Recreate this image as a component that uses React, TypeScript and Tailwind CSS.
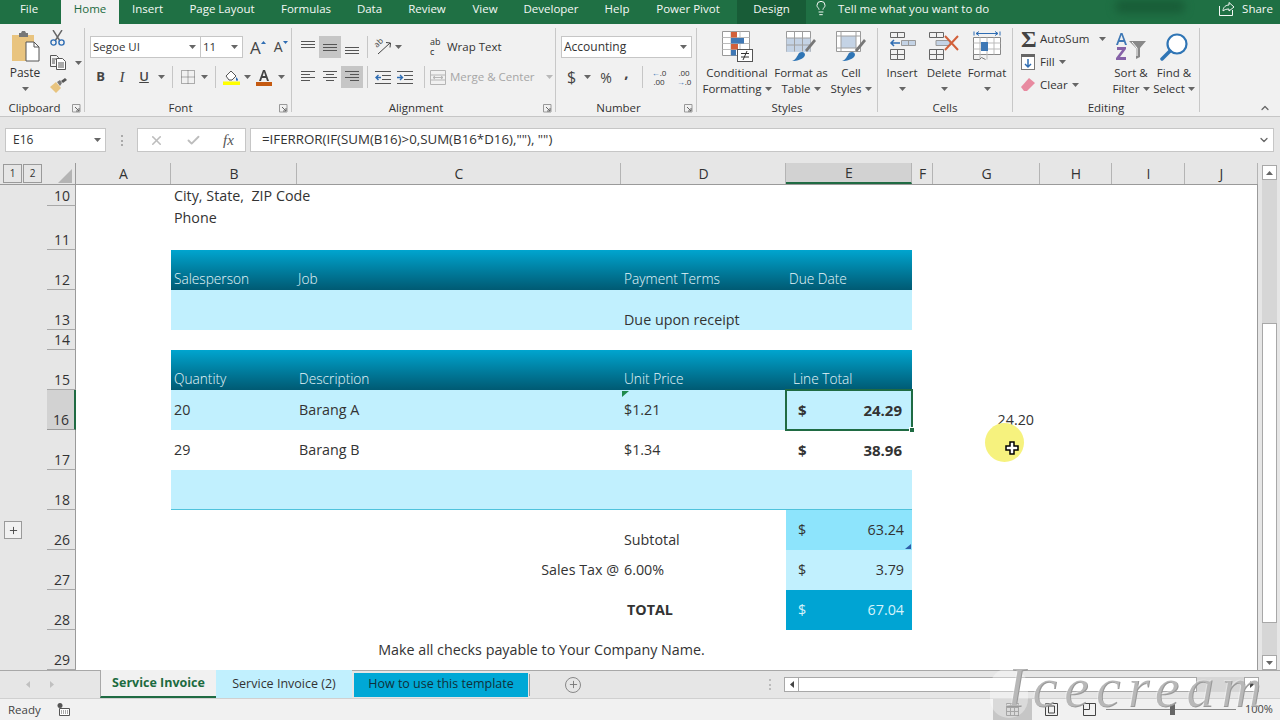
import type { ReactNode } from 'react';
import clsx from 'clsx';
import { Check, ChevronDown, ChevronUp, Lightbulb, Plus, X } from 'lucide-react';

const tabs = [
  { label: 'File', w: 'w-[58px] mr-[3px]' },
  { label: 'Home', w: 'w-[58px] bg-[#f1f1f1] text-[#1c6b40]' },
  { label: 'Insert', w: 'w-[57px]' },
  { label: 'Page Layout', w: 'w-[92px]' },
  { label: 'Formulas', w: 'w-[76px]' },
  { label: 'Data', w: 'w-[51px]' },
  { label: 'Review', w: 'w-[64px]' },
  { label: 'View', w: 'w-[52px]' },
  { label: 'Developer', w: 'w-[80px]' },
  { label: 'Help', w: 'w-[52px]' },
  { label: 'Power Pivot', w: 'w-[90px] mr-[4px]' },
  { label: 'Design', w: 'w-[69px] bg-[#185c37]' },
];

const columns = [
  { label: 'A', w: 'w-[95px]' },
  { label: 'B', w: 'w-[126px]' },
  { label: 'C', w: 'w-[324px]' },
  { label: 'D', w: 'w-[165px]' },
  { label: 'E', w: 'w-[126px] bg-[#d2d2d2] border-b-2 border-b-[#1f6b43]' },
  { label: 'F', w: 'w-[21px]' },
  { label: 'G', w: 'w-[107px]' },
  { label: 'H', w: 'w-[72px]' },
  { label: 'I', w: 'w-[73px]' },
  { label: 'J', w: 'w-[73px]' },
];

const BAND = 'bg-[#c1f0fe]';
const HEAD = 'bg-gradient-to-b from-[#00a5cf] to-[#005a73] text-[#e6f5f9] items-end text-[13.7px] font-light';

function Caret({ className }: { className?: string }) {
  return (
    <svg width="7" height="4" viewBox="0 0 7 4" className={clsx('inline-block shrink-0', className)}>
      <path d="M0 0h7L3.5 4z" fill="#666" />
    </svg>
  );
}

function Slot({ className, children }: { className?: string; children?: ReactNode }) {
  return <span className={clsx('flex shrink-0 items-center justify-center h-full', className)}>{children}</span>;
}

function Sep() {
  return <span className="w-px h-[22px] bg-[#c6c6c6] shrink-0" />;
}

function Launcher() {
  return (
    <svg width="9" height="9" viewBox="0 0 9 9" className="absolute right-[3px] top-[4px]">
      <path d="M.5 8V.5H8V8z" fill="none" stroke="#999" />
      <path d="M3 3l4 4M7 4v3H4" fill="none" stroke="#666" />
    </svg>
  );
}

function Group({ w, label, launcher, children }: { w: string; label: string; launcher?: boolean; children: ReactNode }) {
  return (
    <div className={clsx('relative h-[84px] shrink-0 border-r border-[#c8c8c8]', w)}>
      <div className="h-[72px]">{children}</div>
      <div className={clsx('relative h-[16px] leading-[16px] text-center text-[#333]', launcher && 'pr-[15px]')}>
        {label}
        {launcher && <Launcher />}
      </div>
    </div>
  );
}

function BigButton({ w, icon, line1, line2 }: { w: string; icon: ReactNode; line1: string; line2?: string }) {
  return (
    <div className={clsx('flex flex-col items-center shrink-0 whitespace-nowrap leading-[16px]', w)}>
      <div className="h-[37px] flex items-center justify-center">{icon}</div>
      <div>{line1}</div>
      <div className="h-[16px] flex items-center gap-[3px]">
        {line2}
        <Caret />
      </div>
    </div>
  );
}

function Lines({ rows }: { rows: [number, number][] }) {
  return (
    <svg width="16" height="14" viewBox="0 0 16 14">
      {rows.map(([x, w], i) => (
        <rect key={i} x={x} y={i * 3 + 1} width={w} height="1" fill="#555" />
      ))}
    </svg>
  );
}

function VAlign({ y }: { y: number }) {
  return (
    <svg width="15" height="14" viewBox="0 0 15 14">
      <rect x="0" y={y} width="14" height="1" fill="#555" />
      <rect x="0" y={y + 3} width="14" height="1" fill="#555" />
      <rect x="0" y={y + 6} width="14" height="1" fill="#555" />
    </svg>
  );
}

function PasteIcon() {
  return (
    <svg width="29" height="31" viewBox="0 0 29 31">
      <path d="M1 4h22v26H1z" fill="#e9c47f" />
      <path d="M8 4V2h2l1-2h3l1 2h2v4H8z" fill="#777" />
      <path d="M15 11h8l5 5v14H15z" fill="#fff" stroke="#555" />
      <path d="M23 11v5h5" fill="none" stroke="#555" />
    </svg>
  );
}

function CutIcon() {
  return (
    <svg width="15" height="16" viewBox="0 0 15 16" fill="none">
      <path d="M3 0l7 11M12 0L5 11" stroke="#666" strokeWidth="1.4" />
      <circle cx="3.5" cy="12.5" r="2.6" stroke="#2f6db3" strokeWidth="1.4" />
      <circle cx="11.5" cy="12.5" r="2.6" stroke="#2f6db3" strokeWidth="1.4" />
    </svg>
  );
}

function CopyIcon() {
  return (
    <svg width="16" height="15" viewBox="0 0 16 15" fill="none" stroke="#555">
      <path d="M.5.5h6l2 2v9H.5z" fill="#f4f4f4" />
      <path d="M6.5 3.5h6l3 3v8h-9z" fill="#fff" />
      <path d="M8 8h6M8 10h6M8 12h6M2 4h4M2 6h3M2 8h3" />
    </svg>
  );
}

function BrushIcon() {
  return (
    <svg width="17" height="15" viewBox="0 0 17 15">
      <path d="M0 9l6-5 5 6-5 5z" fill="#e8c47f" />
      <path d="M7 4l3-2 2 3-2 3z" fill="#777" />
      <path d="M11 3l4-3 2 2-4 3z" fill="#555" />
    </svg>
  );
}

function BordersIcon() {
  return (
    <svg width="14" height="14" viewBox="0 0 14 14" fill="none" stroke="#666" strokeDasharray="1 1">
      <path d="M.5.5h13v13H.5zM7 .5v13M.5 7h13" />
    </svg>
  );
}

function FillIcon() {
  return (
    <svg width="17" height="16" viewBox="0 0 17 16">
      <path d="M3 7l5-5 5 5-4 4H6z" fill="#fff" stroke="#555" />
      <path d="M13 8c1 1 2 2 2 3s-2 1-2 0z" fill="#2f6db3" />
      <rect x="0" y="12.5" width="17" height="3.5" fill="#ffff00" />
    </svg>
  );
}

function FontColorIcon() {
  return (
    <svg width="16" height="17" viewBox="0 0 16 17">
      <rect x="0" y="13" width="16" height="4" fill="#c55a11" />
      <path d="M3 12L7 1h2l4 11h-2l-1-3H6l-1 3zM6.7 7h2.6L8 3z" fill="#444" />
    </svg>
  );
}

function OrientationIcon() {
  return (
    <svg width="17" height="16" viewBox="0 0 17 16" fill="none" className="overflow-visible">
      <text x="0" y="0" fontSize="8" fill="#444" transform="translate(2 9) rotate(-45)">ab</text>
      <path d="M3 15L15 4M11 3.500l4.500.5-.5 4.500" stroke="#444" />
    </svg>
  );
}

function IndentIcon({ flip }: { flip?: boolean }) {
  return (
    <svg width="16" height="13" viewBox="0 0 16 13" fill="none">
      <path d="M0 .5h16M7 4.500h9M7 8.500h9M0 12.500h16" stroke="#555" />
      <path d={flip ? 'M0 6.500h5M3 4l2.500 2.500L3 9' : 'M6 6.500H1M3.500 4L1 6.500 3.500 9'} stroke="#2f6db3" strokeWidth="1.4" />
    </svg>
  );
}

function MergeIcon() {
  return (
    <svg width="16" height="15" viewBox="0 0 16 15" fill="none" stroke="#b5b5b5">
      <path d="M.5.5h15v14H.5zM.5 5h15M.5 10h15M3 7.500h10M5 6L3 7.500 5 9M11 6l2 1.500L11 9" />
    </svg>
  );
}

function CondFormatIcon() {
  return (
    <svg width="31" height="31" viewBox="0 0 31 31">
      <path d="M.5.5h27v24H.5z" fill="#fff" stroke="#999" />
      <path d="M9 .5v24M18 .5v24M.5 6.500h27M.5 12.500h27M.5 18.500h27" stroke="#bbb" />
      <rect x="9" y="1" width="6" height="5.5" fill="#d2603a" />
      <rect x="9" y="7" width="13" height="5.5" fill="#3f78b5" />
      <rect x="9" y="13" width="7" height="5.5" fill="#d2603a" />
      <rect x="9" y="19" width="5" height="5.5" fill="#3f78b5" />
      <rect x="15.5" y="18.5" width="15" height="12" fill="#fff" stroke="#555" />
      <path d="M19 22.500h8M19 26h8M25 20l-4 9" stroke="#333" />
    </svg>
  );
}

function TableIcon() {
  return (
    <svg width="30" height="31" viewBox="0 0 30 31">
      <path d="M.5.5h24v20H.5z" fill="#fff" stroke="#999" />
      <path d="M.5 7h24v14H.5z" fill="#c4d3e5" />
      <path d="M8.500.5v20M16.500.5v20M.5 7h24M.5 14h24" stroke="#a0a0a0" />
      <path d="M19 19l9-11 2 2-9 11z" fill="#777" />
      <path d="M6 30c4-1 5-5 7-8 3-2 6-1 6 2-1 4-8 6-13 6z" fill="#2f75b5" />
    </svg>
  );
}

function CellStylesIcon() {
  return (
    <svg width="30" height="31" viewBox="0 0 30 31">
      <path d="M.5.5h24v20H.5z" fill="#fff" stroke="#999" />
      <path d="M5 5h15v12H5z" fill="#c4d3e5" />
      <path d="M5 .5v20M20 .5v20M.5 5h24M.5 17h24" stroke="#a0a0a0" />
      <path d="M19 19l9-11 2 2-9 11z" fill="#777" />
      <path d="M6 30c4-1 5-5 7-8 3-2 6-1 6 2-1 4-8 6-13 6z" fill="#2f75b5" />
    </svg>
  );
}

function InsertIcon() {
  return (
    <svg width="27" height="29" viewBox="0 0 27 29" fill="none">
      <path d="M1.500.5h14v5h-14zM8.500.5v5M1.500 17.500h14v10h-14zM8.500 17.500v10M1.500 22.500h14" stroke="#666" />
      <path d="M12.500 8.500h14v5h-14z" fill="#c4d3e5" stroke="#999" />
      <path d="M19.500 8.500v5" stroke="#999" />
      <path d="M11 11H2M5 8l-3 3 3 3" stroke="#2f6db3" strokeWidth="1.5" />
    </svg>
  );
}

function DeleteIcon() {
  return (
    <svg width="30" height="29" viewBox="0 0 30 29" fill="none">
      <path d="M.5.5h14v5H.5zM7.500.5v5M.5 17.500h14v10H.5zM7.500 17.500v10M.5 22.500h14" stroke="#666" />
      <path d="M7 8.500h14v5H7z" fill="#c4d3e5" stroke="#999" />
      <path d="M16 4l13 14M29 4L16 18" stroke="#d2603a" strokeWidth="2" />
    </svg>
  );
}

function FormatIcon() {
  return (
    <svg width="28" height="31" viewBox="0 0 28 31" fill="none">
      <path d="M.5 6.500h27v17H.5z" fill="#fff" stroke="#888" />
      <path d="M7 6.500v22M14 6.500v22M21 6.500v17M.5 12h27M.5 18h27" stroke="#bbb" />
      <rect x="8" y="11" width="7" height="9" fill="#3f78b5" />
      <path d="M.5 23.500v5h6l2-2 4 2" stroke="#777" />
      <path d="M1 .5v4M27 .5v4M3 2.500h22M6 .5L3 2.500l3 2M22 .5l3 2-3 2" stroke="#2f6db3" />
    </svg>
  );
}

function SortIcon() {
  return (
    <svg width="31" height="28" viewBox="0 0 31 28">
      <path d="M0 12L4.500 0h2L11 12H9l-1-3H3l-1 3zM3.700 7h3.600L5.500 2z" fill="#3f78b5" />
      <path d="M1 14h9v2l-6 8h6v3H0v-2l6-8H1z" fill="#8662a8" />
      <path d="M13 8h17l-6 7v9l-4 2V15z" fill="#888" />
      <path d="M16 9l5 6v8" stroke="#fff" fill="none" />
    </svg>
  );
}

function FindIcon() {
  return (
    <svg width="28" height="28" viewBox="0 0 28 28" fill="none">
      <circle cx="17" cy="11" r="9.500" stroke="#2f75b5" strokeWidth="2.2" fill="#fff" />
      <path d="M10 18L2 26" stroke="#2f75b5" strokeWidth="3.5" strokeLinecap="round" />
    </svg>
  );
}

function Ribbon() {
  return (
    <div className="flex h-[93px] pt-[4px] bg-[#f1f1f1] border-b border-[#c6c6c6] text-[11.5px] text-[#333]">
      <Group w="w-[85px]" label="Clipboard" launcher>
        <div className="flex">
          <div className="w-[50px] flex flex-col items-center">
            <div className="h-[34px] flex items-end">
              <PasteIcon />
            </div>
            <div className="mt-[3px] leading-[16px] text-[12px]">Paste</div>
            <Caret className="mt-[6px]" />
          </div>
          <div className="flex flex-col gap-[8px] pt-[2px]">
            <CutIcon />
            <div className="flex items-center gap-[9px] mt-[1px]">
              <CopyIcon />
              <Caret />
            </div>
            <BrushIcon />
          </div>
        </div>
      </Group>

      <Group w="w-[207px]" label="Font" launcher>
        <div className="flex flex-col gap-[8px] pt-[8px] pl-[5px]">
          <div className="flex items-center h-[22px]">
            <div className="w-[111px] h-[22px] bg-white border border-[#c6c6c6] flex items-center justify-between pl-[2px] pr-[4px] leading-none">
              Segoe UI
              <Caret />
            </div>
            <div className="w-[42px] h-[22px] bg-white border border-l-0 border-[#c6c6c6] flex items-center justify-between pl-[2px] pr-[4px] leading-none">
              11
              <Caret />
            </div>
            <span className="ml-[7px] text-[17px] leading-none text-[#444]">A</span>
            <svg width="5" height="3" className="mb-[10px]"><path d="M0 3l2.500-3L5 3z" fill="#2f6db3" /></svg>
            <span className="ml-[8px] text-[14px] leading-none text-[#444]">A</span>
            <svg width="5" height="3" className="mb-[10px]"><path d="M0 0l2.500 3L5 0z" fill="#2f6db3" /></svg>
          </div>
          <div className="flex items-center h-[22px]">
            <Slot className="w-[21px] font-bold text-[13px] text-[#444]">B</Slot>
            <Slot className="w-[22px] italic text-[#444] font-['Liberation_Serif',serif] text-[15px]">I</Slot>
            <Slot className="w-[22px] underline text-[13px] text-[#444] font-semibold">U</Slot>
            <Slot className="w-[12px]"><Caret /></Slot>
            <Slot className="w-[5px]" />
            <Sep />
            <Slot className="w-[3px]" />
            <Slot className="w-[23px]"><BordersIcon /></Slot>
            <Slot className="w-[11px]"><Caret /></Slot>
            <Slot className="w-[5px]" />
            <Sep />
            <Slot className="w-[3px]" />
            <Slot className="w-[24px]"><FillIcon /></Slot>
            <Slot className="w-[8px]"><Caret /></Slot>
            <Slot className="w-[26px]"><FontColorIcon /></Slot>
            <Slot className="w-[8px]"><Caret /></Slot>
          </div>
        </div>
      </Group>

      <Group w="w-[264px]" label="Alignment" launcher>
        <div className="flex flex-col gap-[8px] pt-[8px] pl-[5px]">
          <div className="flex items-center h-[22px]">
            <Slot className="w-[22px]"><VAlign y={1} /></Slot>
            <Slot className="w-[22px] bg-[#c6c6c6]"><VAlign y={4} /></Slot>
            <Slot className="w-[22px]"><VAlign y={7} /></Slot>
            <Slot className="w-[4px]" />
            <Sep />
            <Slot className="w-[4px]" />
            <Slot className="w-[22px]"><OrientationIcon /></Slot>
            <Slot className="w-[8px]"><Caret /></Slot>
            <Slot className="w-[28px]" />
            <span className="flex items-center whitespace-nowrap">
              <span className="text-[#2a2a2a] text-[9px] leading-[10px] w-[17px]">
                ab
                <br />
                c
              </span>
              Wrap Text
            </span>
          </div>
          <div className="flex items-center h-[22px]">
            <Slot className="w-[22px]"><Lines rows={[[1, 14], [1, 9], [1, 14], [1, 9]]} /></Slot>
            <Slot className="w-[22px]"><Lines rows={[[1, 14], [4, 8], [1, 14], [4, 8]]} /></Slot>
            <Slot className="w-[22px] bg-[#c6c6c6]"><Lines rows={[[1, 14], [6, 9], [1, 14], [6, 9]]} /></Slot>
            <Slot className="w-[4px]" />
            <Sep />
            <Slot className="w-[4px]" />
            <Slot className="w-[22px]"><IndentIcon /></Slot>
            <Slot className="w-[22px]"><IndentIcon flip /></Slot>
            <Slot className="w-[8px]" />
            <Sep />
            <Slot className="w-[5px]" />
            <MergeIcon />
            <span className="ml-[4px] w-[96px] text-[#a6a6a6] whitespace-nowrap">Merge &amp; Center</span>
            <Caret className="opacity-40" />
          </div>
        </div>
      </Group>

      <Group w="w-[141px]" label="Number" launcher>
        <div className="flex flex-col gap-[8px] pt-[8px] pl-[5px]">
          <div className="w-[131px] h-[22px] bg-white border border-[#c6c6c6] flex items-center justify-between pl-[2px] pr-[4px] leading-none text-[12px]">
            Accounting
            <Caret />
          </div>
          <div className="flex items-center h-[22px]">
            <Slot className="w-[21px] text-[16px] text-[#444]">$</Slot>
            <Slot className="w-[11px]"><Caret /></Slot>
            <Slot className="w-[26px] text-[14px] text-[#444]">%</Slot>
            <Slot className="w-[15px] text-[15px] font-bold text-[#444] pb-[10px]">,</Slot>
            <Slot className="w-[8px]" />
            <Sep />
            <Slot className="w-[7px]" />
            <Slot className="w-[18px] text-[8px] leading-[9px] text-[#333] flex-col">
              <span><span className="text-[#2f6db3]">←</span>.0</span>
              <span>.00</span>
            </Slot>
            <Slot className="w-[7px]" />
            <Slot className="w-[18px] text-[8px] leading-[9px] text-[#333] flex-col">
              <span>.00</span>
              <span><span className="text-[#2f6db3]">→</span>.0</span>
            </Slot>
          </div>
        </div>
      </Group>

      <Group w="w-[181px]" label="Styles">
        <div className="flex">
          <BigButton w="w-[80px]" icon={<CondFormatIcon />} line1="Conditional" line2="Formatting" />
          <BigButton w="w-[48px]" icon={<TableIcon />} line1="Format as" line2="Table" />
          <BigButton w="w-[52px]" icon={<CellStylesIcon />} line1="Cell" line2="Styles" />
        </div>
      </Group>

      <Group w="w-[135px]" label="Cells">
        <div className="flex pl-[2px]">
          <BigButton w="w-[44px]" icon={<InsertIcon />} line1="Insert" />
          <BigButton w="w-[40px]" icon={<DeleteIcon />} line1="Delete" />
          <BigButton w="w-[46px]" icon={<FormatIcon />} line1="Format" />
        </div>
      </Group>

      <Group w="w-[187px]" label="Editing">
        <div className="flex">
          <div className="w-[97px] flex flex-col pl-[8px]">
            <div className="h-[22px] flex items-center">
              <span className="w-[19px] text-[24px] leading-none font-bold text-[#444] font-['Liberation_Serif',serif]">Σ</span>
              AutoSum
              <Caret className="ml-[10px]" />
            </div>
            <div className="h-[23px] flex items-center">
              <svg width="14" height="16" viewBox="0 0 14 16" className="mr-[5px]">
                <rect x=".5" y=".5" width="13" height="15" fill="#fff" stroke="#777" />
                <rect x="0" y="0" width="14" height="3" fill="#666" />
                <path d="M7 5v8M4 10l3 3 3-3" stroke="#2f6db3" strokeWidth="1.5" fill="none" />
              </svg>
              Fill
              <Caret className="ml-[4px]" />
            </div>
            <div className="h-[23px] flex items-center">
              <svg width="14" height="13" viewBox="0 0 14 13" className="mr-[5px]">
                <path d="M0 9l8-9 6 5-8 8H3z" fill="#e88aa0" />
              </svg>
              Clear
              <Caret className="ml-[4px]" />
            </div>
          </div>
          <BigButton w="w-[42px]" icon={<SortIcon />} line1="Sort &" line2="Filter" />
          <BigButton w="w-[44px]" icon={<FindIcon />} line1="Find &" line2="Select" />
        </div>
      </Group>

      <div className="flex-1 relative">
        <ChevronUp size={12} strokeWidth={2.5} className="absolute right-[9px] top-[74px] text-[#666]" />
      </div>
    </div>
  );
}

function FormulaBar() {
  return (
    <div className="flex items-center h-[46px] bg-[#e6e6e6] text-[12px] text-[#333]">
      <div className="ml-[5px] w-[101px] h-[24px] bg-white border border-[#c6c6c6] flex items-center justify-between pl-[7px] pr-[4px]">
        E16
        <Caret />
      </div>
      <div className="w-[31px] flex justify-center text-[#aaa] leading-none">
        <span className="w-[2px] h-[11px] border-l-2 border-dotted border-[#aaa]" />
      </div>
      <div className="w-[109px] h-[24px] bg-white border border-[#c6c6c6] flex items-center">
        <Slot className="w-[37px]"><X size={15} strokeWidth={2.5} className="text-[#bdbdbd]" /></Slot>
        <Slot className="w-[37px]"><Check size={15} strokeWidth={3} className="text-[#bdbdbd]" /></Slot>
        <Slot className="w-[33px] italic text-[15px] text-[#555] font-['Liberation_Serif',serif]">fx</Slot>
      </div>
      <div className="ml-[4px] w-[1024px] h-[24px] bg-white border border-[#c6c6c6] flex items-center justify-between pl-[11px] pr-[3px] text-[13.3px]">
        {'=IFERROR(IF(SUM(B16)>0,SUM(B16*D16),""), "")'}
        <ChevronDown size={12} strokeWidth={2.5} className="text-[#666]" />
      </div>
    </div>
  );
}

function Row({ num, h, active, children, plus }: { num: number; h: string; active?: boolean; children?: ReactNode; plus?: boolean }) {
  return (
    <div className={clsx('flex', h)}>
      <div className="w-[47px] shrink-0 bg-[#e6e6e6] flex items-center pl-[4px]">
        {plus && (
          <div className="w-[18px] h-[18px] border border-[#9a9a9a] bg-[#f1f1f1] flex items-center justify-center">
            <Plus size={11} className="text-[#444]" />
          </div>
        )}
      </div>
      <div
        className={clsx(
          'w-[29px] shrink-0 flex items-end justify-end pr-[5px] border-b border-r text-[14px] leading-[18px] text-[#333]',
          active ? 'bg-[#d2d2d2] border-r-2 border-r-[#1f6b43] border-b-[#9a9a9a]' : 'bg-[#e6e6e6] border-b-[#a8a8a8] border-r-[#9a9a9a]',
        )}
      >
        {num}
      </div>
      <div className="grid grid-cols-[95px_126px_324px_165px_126px_21px_107px] flex-1 bg-white text-[14.3px] text-[#333] whitespace-nowrap">
        {children}
      </div>
    </div>
  );
}

function Cell({ className, children }: { className?: string; children?: ReactNode }) {
  return <div className={clsx('relative flex items-center', className)}>{children}</div>;
}

function Money({ bold, cell, amount, pr }: { bold?: boolean; cell: string; amount: string; pr: string }) {
  return (
    <Cell className={clsx('col-start-5 justify-between pl-[12px]', pr, bold && 'font-bold text-[15px]', cell)}>
      <span>$</span>
      <span>{amount}</span>
    </Cell>
  );
}

function Sheet() {
  return (
    <div className="flex flex-col h-[485px] border-r border-[#9a9a9a]">
      <Row num={10} h="h-[21px]">
        <Cell className="col-start-2 pl-[3px]">City, State,&nbsp; ZIP Code</Cell>
      </Row>
      <Row num={11} h="h-[44px]">
        <Cell className="col-start-2 pl-[3px] items-start pt-[1px]">Phone</Cell>
      </Row>
      <Row num={12} h="h-[40px]">
        <Cell className={clsx('col-start-2 pl-[3px]', HEAD)}>Salesperson</Cell>
        <Cell className={clsx('pl-[1px]', HEAD)}>Job</Cell>
        <Cell className={clsx('pl-[3px]', HEAD)}>Payment Terms</Cell>
        <Cell className={clsx('pl-[3px]', HEAD)}>Due Date</Cell>
      </Row>
      <Row num={13} h="h-[40px]">
        <Cell className={clsx('col-start-2', BAND)} />
        <Cell className={BAND} />
        <Cell className={clsx('pl-[3px] items-end', BAND)}>Due upon receipt</Cell>
        <Cell className={BAND} />
      </Row>
      <Row num={14} h="h-[20px]" />
      <Row num={15} h="h-[40px]">
        <Cell className={clsx('col-start-2 pl-[3px]', HEAD)}>Quantity</Cell>
        <Cell className={clsx('pl-[2px]', HEAD)}>Description</Cell>
        <Cell className={clsx('pl-[3px]', HEAD)}>Unit Price</Cell>
        <Cell className={clsx('pl-[7px]', HEAD)}>Line Total</Cell>
      </Row>
      <Row num={16} h="h-[40px]" active>
        <Cell className={clsx('col-start-2 pl-[3px]', BAND)}>20</Cell>
        <Cell className={clsx('pl-[2px]', BAND)}>Barang A</Cell>
        <Cell className={clsx('pl-[3px]', BAND)}>
          <svg width="7" height="6" className="absolute left-[1px] top-[1px]"><path d="M0 0h7L0 6z" fill="#1f8a4c" /></svg>
          $1.21
        </Cell>
        <Cell className={clsx('col-start-5 justify-between pl-[12px] pr-[10px] font-bold text-[15px]', BAND)}>
          <span>$</span>
          <span>24.29</span>
          <span className="absolute -left-px -top-px -right-px -bottom-px border-2 border-[#1f6b43]" />
          <span className="absolute -right-[3px] -bottom-[3px] w-[6px] h-[6px] bg-[#1f6b43] border border-white" />
        </Cell>
        <Cell className="col-start-7 justify-end pr-[6px] items-end">24.20</Cell>
      </Row>
      <Row num={17} h="h-[40px]">
        <Cell className="col-start-2 pl-[3px]">29</Cell>
        <Cell className="pl-[2px]">Barang B</Cell>
        <Cell className="pl-[3px]">$1.34</Cell>
        <Money bold cell="" amount="38.96" pr="pr-[10px]" />
      </Row>
      <Row num={18} h="h-[40px]">
        <Cell className={clsx('col-start-2 col-span-4 border-b border-[#4fc3dc]', BAND)} />
      </Row>
      <Row num={26} h="h-[40px]" plus>
        <Cell className="col-start-4 pl-[3px] items-end">Subtotal</Cell>
        <Cell className="col-start-5 justify-between pl-[12px] pr-[8px] bg-[#8de4fc]">
          <span>$</span>
          <span>63.24</span>
          <svg width="6" height="5" className="absolute right-[1px] bottom-[1px]"><path d="M6 0v5H0z" fill="#2f5fa8" /></svg>
        </Cell>
      </Row>
      <Row num={27} h="h-[40px]">
        <Cell className="col-start-3 justify-end pr-[2px]">Sales Tax @</Cell>
        <Cell className="pl-[3px]">6.00%</Cell>
        <Money cell={BAND} amount="3.79" pr="pr-[8px]" />
      </Row>
      <Row num={28} h="h-[40px]">
        <Cell className="col-start-4 pl-[6px] font-bold">TOTAL</Cell>
        <Money cell="bg-[#00a4d3] text-[#d5f3fb]" amount="67.04" pr="pr-[8px]" />
      </Row>
      <Row num={29} h="h-[40px]">
        <Cell className="col-start-2 col-span-4 justify-center">Make all checks payable to Your Company Name.</Cell>
      </Row>
    </div>
  );
}

function VScroll() {
  return (
    <div className="w-[22px] shrink-0 bg-[#e6e6e6] pl-[4px] pr-[3px] pt-[2px] flex flex-col">
      <div className="h-[15px] bg-white border border-[#a8a8a8] flex items-center justify-center">
        <svg width="7" height="4"><path d="M0 4l3.500-4L7 4z" fill="#666" /></svg>
      </div>
      <div className="flex-1 bg-[#d6d6d6] flex flex-col">
        <div className="h-[143px]" />
        <div className="h-[300px] bg-white border border-[#a8a8a8]" />
      </div>
      <div className="h-[15px] bg-white border border-[#a8a8a8] flex items-center justify-center">
        <Caret />
      </div>
    </div>
  );
}

function SheetTabs() {
  return (
    <div className="flex items-center h-[28px] bg-[#e6e6e6] border-t border-[#a8a8a8] text-[12.5px] text-[#333] whitespace-nowrap">
      <div className="w-[100px] h-full flex items-center pl-[26px] gap-[20px]">
        <svg width="4" height="7"><path d="M4 0v7L0 3.500z" fill="#c0c0c0" /></svg>
        <svg width="4" height="7"><path d="M0 0v7l4-3.500z" fill="#c0c0c0" /></svg>
      </div>
      <div className="w-[116px] -mt-[1px] h-[28px] bg-[#f1f1f1] border-b-2 border-[#1f6b43] border-l border-l-[#a8a8a8] flex items-center justify-center font-bold text-[#1c6b40]">
        Service Invoice
      </div>
      <div className="w-[136px] -mt-[1px] h-[28px] bg-[#c1f0fe] flex items-center justify-center">Service Invoice (2)</div>
      <div className="ml-[2px] w-[174px] h-[24px] bg-[#00a8d6] flex items-center justify-center text-[#10303a]">How to use this template</div>
      <div className="ml-[1px] w-px h-[22px] bg-[#9a9a9a]" />
      <div className="ml-[35px] w-[16px] h-[16px] rounded-full border border-[#888] flex items-center justify-center">
        <Plus size={11} className="text-[#777]" />
      </div>
      <div className="ml-[188px] w-[2px] h-[11px] border-l-2 border-dotted border-[#bbb]" />
      <div className="ml-[13px] w-[15px] h-[15px] bg-white border border-[#a8a8a8] flex items-center justify-center">
        <svg width="4" height="7"><path d="M4 0v7L0 3.500z" fill="#444" /></svg>
      </div>
      <div className="w-[398px] h-[15px] bg-white border border-l-0 border-[#a8a8a8]" />
      <div className="w-[47px] h-[15px] bg-[#d6d6d6]" />
      <div className="w-[15px] h-[15px] bg-white border border-[#a8a8a8] flex items-center justify-center">
        <svg width="4" height="7"><path d="M0 0v7l4-3.500z" fill="#444" /></svg>
      </div>
    </div>
  );
}

function StatusBar() {
  return (
    <div className="flex items-center h-[22px] bg-[#f1f1f1] border-t border-[#d0d0d0] text-[11.5px] text-[#444]">
      <span className="ml-[8px] w-[49px]">Ready</span>
      <svg width="13" height="13" viewBox="0 0 13 13">
        <circle cx="3" cy="2.500" r="2.500" fill="#555" />
        <path d="M2.500 5.500h10v7h-10z" fill="#fff" stroke="#555" />
        <path d="M4 8h7M4 10h7" stroke="#555" strokeDasharray="1 1" />
      </svg>
      <div className="ml-[923px] w-[39px] h-full bg-[#c6c6c6] flex items-center justify-center">
        <svg width="13" height="13" viewBox="0 0 13 13" fill="none" stroke="#777">
          <path d="M.5.5h12v12H.5zM4.500.5v12M8.500.5v12M.5 4.500h12M.5 8.500h12" />
        </svg>
      </div>
      <svg width="13" height="13" viewBox="0 0 13 13" fill="none" stroke="#444" className="ml-[13px]">
        <path d="M.5.5h12v12H.5zM3.500 3h6v7h-6z" />
      </svg>
      <svg width="13" height="13" viewBox="0 0 13 13" fill="none" stroke="#444" className="ml-[25px]">
        <path d="M.5.5h12v12H.5zM6.500.5v6h-6" />
      </svg>
      <div className="ml-[10px] relative w-[130px] h-[1px] bg-[#888]">
        <span className="absolute left-[64px] -top-[5px] w-[5px] h-[11px] bg-[#666]" />
      </div>
      <span className="ml-[9px] text-[11px]">100%</span>
    </div>
  );
}

export default function App() {
  return (
    <div className="relative w-[1280px] h-[720px] overflow-hidden bg-white font-['Open_Sans',sans-serif]">
      <div className="flex items-center h-[24px] bg-[#1f7044] text-[11.5px] text-[#f4f8f5] whitespace-nowrap">
        {tabs.map((t) => (
          <div key={t.label} className={clsx('h-full shrink-0 flex items-center justify-center pb-[6px]', t.w)}>
            {t.label}
          </div>
        ))}
        <Lightbulb size={16} strokeWidth={1.5} className="ml-[7px] mr-[9px] -mt-[8px]" />
        <span className="-mt-[6px]">Tell me what you want to do</span>
        <svg width="16" height="14" viewBox="0 0 16 14" fill="none" stroke="#f4f8f5" className="ml-auto -mt-[6px]">
          <path d="M.5 4v9.500h13V8M4 9c0-4 3-6 6-6V.5l5 4.500-5 4V7C7 7 5 8 4 9z" />
        </svg>
        <span className="ml-[7px] mr-[7px] -mt-[6px]">Share</span>
      </div>
      <Ribbon />
      <FormulaBar />
      <div className="flex">
        <div className="flex-1 min-w-0">
          <div className="flex h-[22px] bg-[#e6e6e6] border-b border-[#9a9a9a] text-[14px] text-[#333]">
            <div className="w-[76px] shrink-0 relative flex gap-[1px] pl-[3px] pt-[1px] border-r border-[#9a9a9a]">
              <div className="w-[19px] h-[19px] border border-[#9a9a9a] flex items-center justify-center text-[10px]">1</div>
              <div className="w-[19px] h-[19px] border border-[#9a9a9a] flex items-center justify-center text-[10px]">2</div>
              <svg width="14" height="14" className="absolute right-[3px] bottom-[1px]"><path d="M14 0v14H0z" fill="#b4b4b4" /></svg>
            </div>
            {columns.map((c) => (
              <div key={c.label} className={clsx('h-full shrink-0 flex items-center justify-center pl-[1px] pb-[1px] border-r border-[#b4b4b4]', c.w)}>
                {c.label}
              </div>
            ))}
          </div>
          <Sheet />
        </div>
        <VScroll />
      </div>
      <SheetTabs />
      <StatusBar />

      {/* recorder cursor highlight and watermark sit over the app */}
      <div className="absolute left-[1115px] top-0 w-[70px] h-[13px] rounded-full bg-[#185c37] blur-[4px]" />
      <div className="absolute left-[985px] top-[423px] w-[39px] h-[39px] rounded-full bg-[#f6f27e]" />
      <svg width="14" height="14" viewBox="0 0 14 14" className="absolute left-[1005px] top-[441px]">
        <path d="M5 1h4v4h4v4H9v4H5V9H1V5h4z" fill="#fff" stroke="#000" strokeWidth="1.5" />
      </svg>
      <div className="absolute left-[990px] top-[668px] w-[38px] h-[50px] rounded-full bg-white/35" />
      <div className="absolute left-[1006px] top-[655px] text-[56px] leading-[64px] tracking-[7px] italic text-white/30 font-['Liberation_Serif',serif] [text-shadow:1px_1px_0_#9a9a9a] pointer-events-none">
        Icecream
      </div>
    </div>
  );
}
